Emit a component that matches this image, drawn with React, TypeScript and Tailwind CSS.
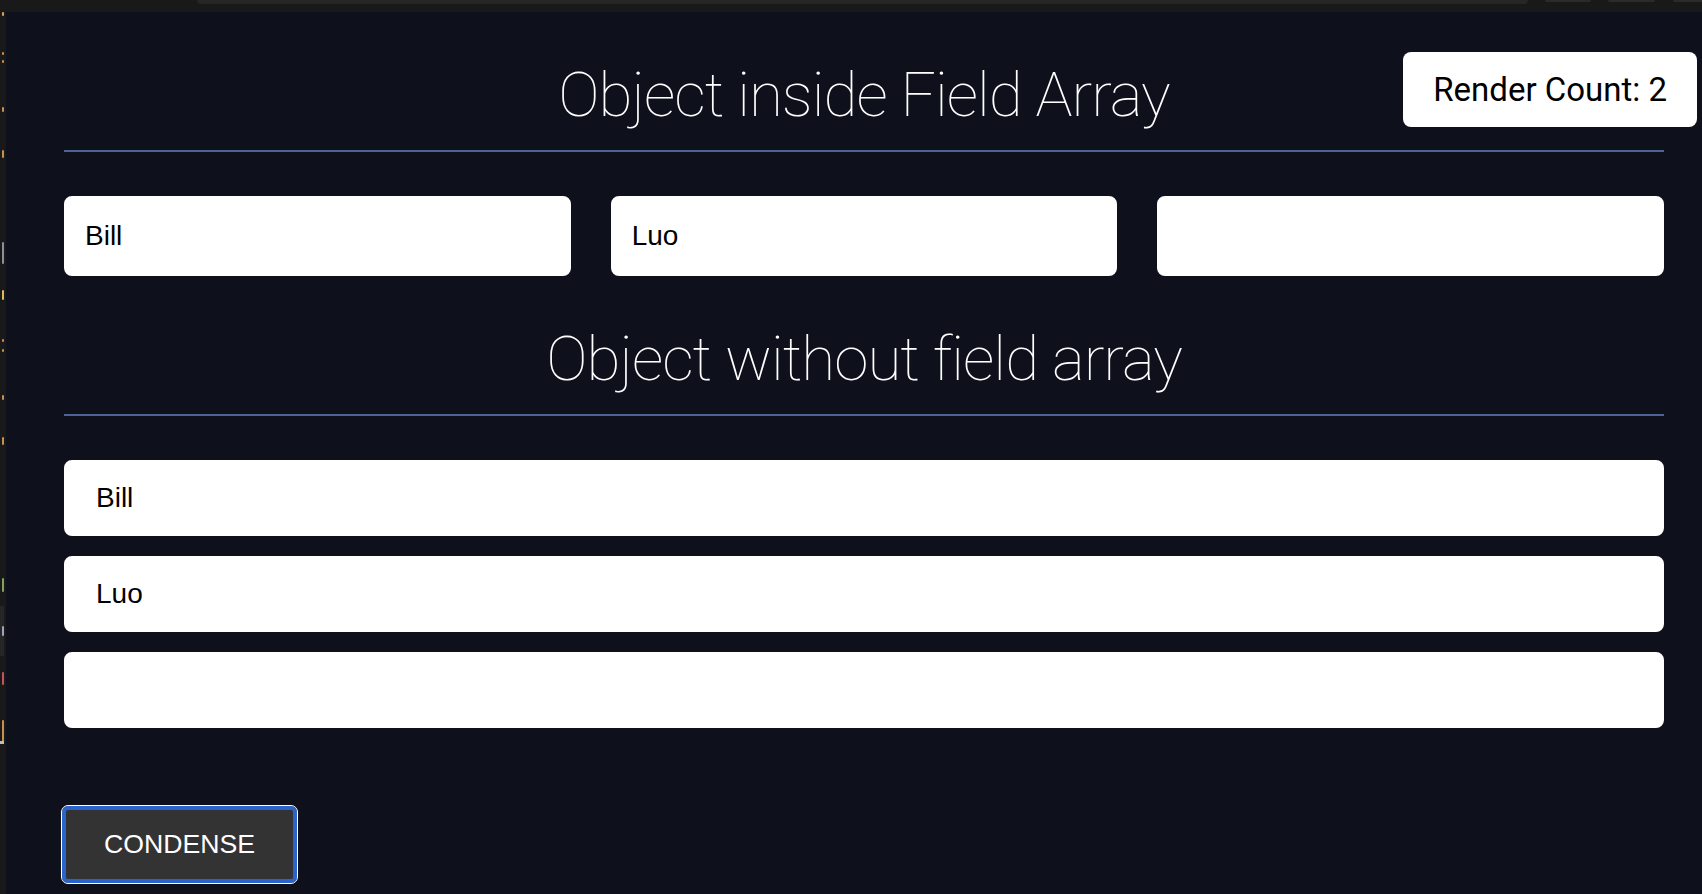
import React from "react";

const titleClass =
  "border-b-2 border-[#4f6294] pb-[19px] text-center text-[62px] leading-[73px] font-thin tracking-[-1px] text-white [font-family:Roboto,'Liberation_Sans',sans-serif]";

const fieldClass =
  "block w-full rounded-lg border-2 border-white bg-white text-[28px] leading-[32px] text-black outline-none [font-family:'Liberation_Sans',Arial,sans-serif]";

const marks = [
  { cls: "top-[0px] h-[4px] bg-[#d9a35c]" },
  { cls: "top-[40px] h-[3px] bg-[#c98f4f]" },
  { cls: "top-[48px] h-[3px] bg-[#c98f4f]" },
  { cls: "top-[95px] h-[5px] bg-[#c98f4f]" },
  { cls: "top-[138px] h-[8px] bg-[#c98f4f]" },
  { cls: "top-[230px] h-[22px] bg-[#8b8f99]" },
  { cls: "top-[278px] h-[10px] bg-[#e0b660]" },
  { cls: "top-[327px] h-[3px] bg-[#c98f4f]" },
  { cls: "top-[337px] h-[3px] bg-[#c98f4f]" },
  { cls: "top-[383px] h-[5px] bg-[#c98f4f]" },
  { cls: "top-[425px] h-[8px] bg-[#c98f4f]" },
  { cls: "top-[566px] h-[14px] bg-[#7fa35f]" },
  { cls: "top-[614px] h-[10px] bg-[#9aa6bf]" },
  { cls: "top-[660px] h-[13px] bg-[#c2545a]" },
  { cls: "top-[708px] h-[22px] bg-[#c98f4f]" },
];

const EditorGutter = () => (
  <div className="relative w-[6px] shrink-0 bg-[#191919]">
    <div className="absolute left-0 top-[594px] h-[50px] w-[4px] bg-[#262626]" />
    {marks.map((m, i) => (
      <div key={i} className={`absolute left-[2px] w-[2px] rounded-sm ${m.cls}`} />
    ))}
    <div className="absolute left-0 top-[729px] h-[3px] w-[4px] bg-[#bdbdbd]" />
  </div>
);

const TopBar = () => (
  <div className="flex h-[12px] w-full shrink-0 items-start bg-[#191919]">
    <div className="ml-[197px] h-[4px] w-[1331px] rounded-b-md bg-[#262626]" />
    <div className="ml-[17px] h-[2px] w-[46px] rounded-b bg-[#2b2b2b]" />
    <div className="ml-[17px] h-[2px] w-[47px] rounded-b bg-[#2b2b2b]" />
    <div className="ml-[18px] h-[2px] w-[29px] rounded-bl bg-[#2b2b2b]" />
  </div>
);

export default function App() {
  return (
    <div className="flex h-screen w-full flex-col overflow-hidden bg-[#0e101c]">
      <TopBar />

      <div className="flex flex-1">
        <EditorGutter />

        {/* Form area */}
        <form className="w-[1600px] pl-[58px] box-content">
          <h1 className={`mt-[46px] ${titleClass}`}>Object inside Field Array</h1>

          <div className="mt-[44px] grid grid-cols-3 gap-[40px]">
            <input className={`${fieldClass} px-[19px] py-[22px]`} defaultValue="Bill" />
            <input className={`${fieldClass} px-[19px] py-[22px]`} defaultValue="Luo" />
            <input className={`${fieldClass} px-[19px] py-[22px]`} defaultValue="" />
          </div>

          <h1 className={`mt-[46px] ${titleClass}`}>Object without field array</h1>

          <div className="mt-[44px] flex flex-col gap-[20px]">
            <input className={`${fieldClass} px-[30px] py-[20px]`} defaultValue="Bill" />
            <input className={`${fieldClass} px-[30px] py-[20px]`} defaultValue="Luo" />
            <input className={`${fieldClass} px-[30px] py-[20px]`} defaultValue="" />
          </div>

          <button
            type="button"
            className="ml-[-2px] mt-[78px] h-[77px] w-[235px] rounded-[6px] border-4 border-[#2b63cc] bg-[#333333] text-[26.67px] leading-none text-white outline-[1.5px] outline-solid outline-white [font-family:'Liberation_Sans',Arial,sans-serif]"
          >
            CONDENSE
          </button>
        </form>
      </div>

      {/* Render counter overlay */}
      <div className="fixed right-[5px] top-[52px] rounded-lg bg-white px-[30px] py-[20px] text-[33px] leading-[35px] text-black [font-family:Roboto,'Liberation_Sans',sans-serif]">
        Render Count: 2
      </div>
    </div>
  );
}
